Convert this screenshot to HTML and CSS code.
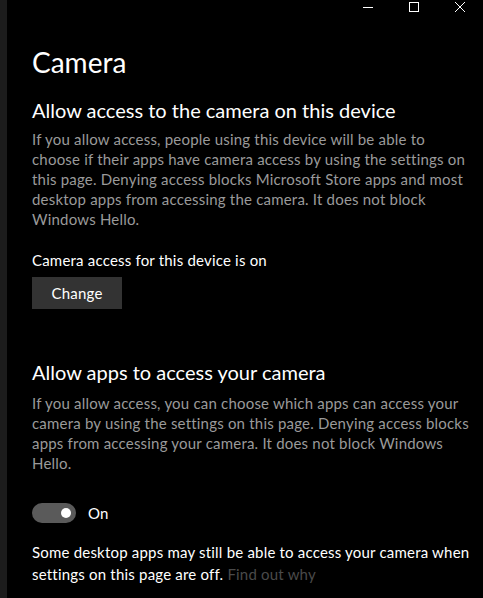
FILE: index.html
```html
<!DOCTYPE html>
<html lang="en">
<head>
<meta charset="utf-8">
<title>Camera</title>
<link rel="stylesheet" href="styles.css">
</head>
<body>
<div class="window">
  <div class="edge"></div>
  <div class="main">
    <div class="titlebar">
      <span class="cap-btn"><svg width="10" height="10" viewBox="0 0 10 10"><path d="M0 5.5H10" stroke="#fff" stroke-width="1"/></svg></span>
      <span class="cap-btn"><svg width="10" height="10" viewBox="0 0 10 10"><rect x="0.5" y="0.5" width="9" height="9" fill="none" stroke="#fff" stroke-width="1"/></svg></span>
      <span class="cap-btn"><svg width="10" height="10" viewBox="0 0 10 10"><path d="M0 0L10 10M10 0L0 10" stroke="#fff" stroke-width="1"/></svg></span>
    </div>
    <div class="content">
      <h1 class="page-title">Camera</h1>
      <h2 class="section-title">Allow access to the camera on this device</h2>
      <p class="desc">If you allow access, people using this device will be able to choose if their apps have camera access by using the settings on this page. Denying access blocks Microsoft Store apps and most desktop apps from accessing the camera. It does not block Windows Hello.</p>
      <p class="status">Camera access for this device is on</p>
      <button class="btn">Change</button>
      <h2 class="section-title second">Allow apps to access your camera</h2>
      <p class="desc desc-second">If you allow access, you can choose which apps can access your camera by using the settings on this page. Denying access blocks apps from accessing your camera. It does not block Windows Hello.</p>
      <div class="toggle-row">
        <span class="toggle"><span class="knob"></span></span>
        <span class="toggle-label">On</span>
      </div>
      <p class="note">Some desktop apps may still be able to access your camera when settings on this page are off. <a class="link">Find out why</a></p>
    </div>
  </div>
</div>
</body>
</html>
```
FILE: styles.css
```css
html, body {
  margin: 0;
  padding: 0;
  background: #000;
  height: 100%;
}
body {
  font-family: "Lato", "Noto Sans", sans-serif;
  color: #fff;
  overflow: hidden;
}
.window {
  display: flex;
  height: 598px;
}
.edge {
  width: 7px;
  flex: none;
  background: #1c1c1c;
}
.main {
  flex: 1;
  display: flex;
  flex-direction: column;
}
.titlebar {
  display: flex;
  justify-content: flex-end;
  height: 14px;
  padding-top: 2px;
}
.cap-btn {
  width: 46px;
  display: flex;
  justify-content: center;
  align-items: flex-start;
}
.content {
  padding: 0 10px 0 25px;
}
.page-title {
  margin: 28px 0 0;
  font-size: 28px;
  font-weight: 400;
  line-height: 36px;
}
.section-title {
  margin: 17px 0 0;
  font-size: 20px;
  font-weight: 400;
  line-height: 26px;
}
.section-title.second {
  margin-top: 50px;
}
.desc, .status, .note, .toggle-label, .btn {
  letter-spacing: 0.2px;
}
.desc {
  margin: 6px 0 0;
  font-size: 15px;
  line-height: 20px;
  color: #9a9a9a;
  max-width: 438px;
}
.desc-second {
  margin-top: 8px;
}
.status {
  margin: 21px 0 0;
  font-size: 15px;
  line-height: 20px;
}
.btn {
  margin-top: 7px;
  width: 90px;
  height: 32px;
  background: #333;
  border: none;
  color: #fff;
  font-family: inherit;
  font-size: 15px;
  padding: 0;
  display: block;
}
.toggle-row {
  display: flex;
  align-items: center;
  margin-top: 30px;
  height: 20px;
}
.toggle {
  width: 44px;
  height: 20px;
  border-radius: 10px;
  background: #5a5a5a;
  display: flex;
  align-items: center;
  justify-content: flex-end;
  padding-right: 5px;
  box-sizing: border-box;
}
.knob {
  width: 10px;
  height: 10px;
  border-radius: 50%;
  background: #fff;
}
.toggle-label {
  margin-left: 12px;
  font-size: 15px;
}
.note {
  margin: 18px 0 0;
  font-size: 15px;
  line-height: 22px;
  max-width: 438px;
}
.link {
  color: #4a4a4a;
}
```
